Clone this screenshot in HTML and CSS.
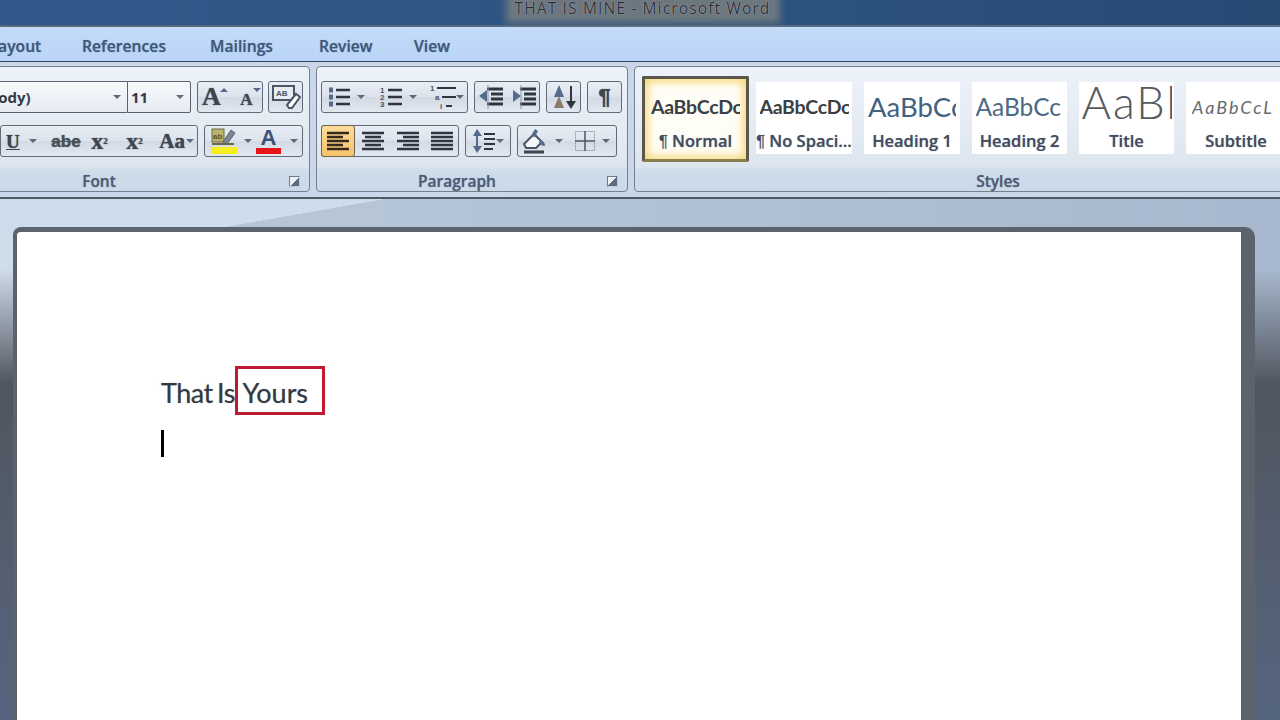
FILE: index.html
```html
<!DOCTYPE html>
<html lang="en">

<head>
    <meta charset="utf-8">
    <title>THAT IS MINE - Microsoft Word</title>
    <link rel="stylesheet" href="styles.css">
</head>

<body>
    <div class="titlebar"><span class="doc-title">THAT IS MINE - Microsoft Word</span></div>

    <div class="tabs">
        <span class="tab tab-layout">Page Layout</span>
        <span class="tab tab-refs">References</span>
        <span class="tab tab-mail">Mailings</span>
        <span class="tab tab-review">Review</span>
        <span class="tab tab-view">View</span>
    </div>

    <div class="ribbon">
        <!-- Font -->
        <section class="group group-font">
            <div class="rows">
                <div class="row">
                    <div class="combo combo-font"><span class="combo-text">(Body)</span><i class="caret"></i></div>
                    <div class="combo combo-size"><span class="combo-text">11</span><i class="caret"></i></div>
                    <div class="btns">
                        <span class="btn w33 glyph big">A<i class="tri-up"></i></span>
                        <span class="btn w33 glyph small">A<i class="tri-down"></i></span>
                    </div>
                    <div class="btns">
                        <span class="btn w35">
                            <svg width="30" height="30" viewBox="0 0 30 30">
                                <rect x="2" y="4" width="21" height="14" fill="#e8edf4" stroke="#4b5563" stroke-width="2" />
                                <text x="5" y="14" class="icon-text">AB</text>
                                <path d="M16 23l9-11 4 3-8 11h-3z" fill="#fff" stroke="#4b5563" stroke-width="2" />
                            </svg>
                        </span>
                    </div>
                </div>
                <div class="row">
                    <div class="btns">
                        <span class="btn w50 glyph u-cell"><u>U</u><i class="caret"></i></span>
                        <span class="btn w32 glyph strike">abe</span>
                        <span class="btn w35 glyph script">x<sub>2</sub></span>
                        <span class="btn w35 glyph script">x<sup>2</sup></span>
                        <span class="btn w46 glyph case">Aa<i class="caret"></i></span>
                    </div>
                    <div class="btns">
                        <span class="btn w51">
                            <svg width="30" height="30" viewBox="0 0 30 30">
                                <rect x="4" y="3" width="12" height="13" fill="#b9b46a" stroke="#6b6a45" />
                                <text x="5" y="13" class="icon-text olive">ab</text>
                                <path d="M15 16l8-12 4 3-8 11z" fill="#7c8794" stroke="#5b6470" />
                                <path d="M4 18h22" stroke="#6b6a45" stroke-width="2" />
                                <rect x="3" y="21" width="26" height="7" fill="#f6ee1e" />
                            </svg>
                            <i class="caret"></i>
                        </span>
                        <span class="btn w48 glyph color-a"><span class="a-stack">A<b></b></span><i class="caret"></i></span>
                    </div>
                </div>
            </div>
            <div class="label"><span class="label-text">Font</span><i class="launcher"></i></div>
        </section>

        <!-- Paragraph -->
        <section class="group group-para">
            <div class="rows">
                <div class="row">
                    <div class="btns">
                        <span class="btn w49">
                            <svg width="24" height="22" viewBox="0 0 24 22">
                                <path d="M2 4h5M2 11h5M2 18h5" stroke="#58688a" stroke-width="5" stroke-dasharray="4 20" />
                                <path d="M9 4h14M9 11h14M9 18h14" stroke="#2f3640" stroke-width="2.500" />
                            </svg>
                            <i class="caret"></i>
                        </span>
                        <span class="btn w55">
                            <svg width="24" height="22" viewBox="0 0 24 22">
                                <text x="1" y="7" class="icon-text">1</text>
                                <text x="1" y="14" class="icon-text">2</text>
                                <text x="1" y="21" class="icon-text">3</text>
                                <path d="M9 4h14M9 11h14M9 18h14" stroke="#2f3640" stroke-width="2.500" />
                            </svg>
                            <i class="caret"></i>
                        </span>
                        <span class="btn w43">
                            <svg width="26" height="26" viewBox="0 0 26 26">
                                <text x="0" y="7" class="icon-text">1</text>
                                <text x="5" y="16" class="icon-text">a</text>
                                <text x="10" y="25" class="icon-text">i</text>
                                <path d="M7 4h19M12 13h14M16 22h6" stroke="#2f3640" stroke-width="2" />
                            </svg>
                            <i class="caret tight"></i>
                        </span>
                    </div>
                    <div class="btns">
                        <span class="btn w33">
                            <svg width="26" height="26" viewBox="0 0 26 26">
                                <path d="M9 5h16M13 10h12M13 15h12M9 20h16" stroke="#2f3640" stroke-width="3" />
                                <path d="M1 12l8-6v12z" fill="#54698c" />
                                <path d="M10 1v24" stroke="#8d98a8" />
                            </svg>
                        </span>
                        <span class="btn w33">
                            <svg width="26" height="26" viewBox="0 0 26 26">
                                <path d="M9 5h16M13 10h12M13 15h12M9 20h16" stroke="#2f3640" stroke-width="3" />
                                <path d="M10 12l-8-6v12z" fill="#54698c" />
                                <path d="M10 1v24" stroke="#8d98a8" />
                            </svg>
                        </span>
                    </div>
                    <div class="btns">
                        <span class="btn w35">
                            <svg width="26" height="28" viewBox="0 0 26 28">
                                <path d="M8 2l5 12H3z" fill="#54698c" />
                                <path d="M8 13l5 12H3z" fill="#8a7a6a" />
                                <path d="M20 3v20" stroke="#2f3640" stroke-width="2" />
                                <path d="M15 18l5 8 5-8z" fill="#2f3640" />
                            </svg>
                        </span>
                    </div>
                    <div class="btns">
                        <span class="btn w35 glyph pilcrow">¶</span>
                    </div>
                </div>
                <div class="row">
                    <div class="btns">
                        <span class="btn w34 active">
                            <svg width="24" height="20" viewBox="0 0 24 20">
                                <path d="M1 2h22M1 6h16M1 10h22M1 14h16M1 18h22" stroke="#352a1c" stroke-width="2.600" />
                            </svg>
                        </span>
                        <span class="btn w35">
                            <svg width="24" height="20" viewBox="0 0 24 20">
                                <path d="M1 2h22M4 6h16M1 10h22M4 14h16M1 18h22" stroke="#2f3640" stroke-width="2.600" />
                            </svg>
                        </span>
                        <span class="btn w35">
                            <svg width="24" height="20" viewBox="0 0 24 20">
                                <path d="M1 2h22M7 6h16M1 10h22M7 14h16M1 18h22" stroke="#2f3640" stroke-width="2.600" />
                            </svg>
                        </span>
                        <span class="btn w34">
                            <svg width="24" height="20" viewBox="0 0 24 20">
                                <path d="M1 2h22M1 6h22M1 10h22M1 14h22M1 18h22" stroke="#2f3640" stroke-width="2.600" />
                            </svg>
                        </span>
                    </div>
                    <div class="btns">
                        <span class="btn w46">
                            <svg width="24" height="26" viewBox="0 0 24 26">
                                <path d="M5 1l5 7H1zM5 25l5-7H1z" fill="#54698c" />
                                <path d="M5 7v12" stroke="#54698c" stroke-width="2" />
                                <path d="M12 6h11M12 11h11M12 16h11M12 21h9" stroke="#2f3640" stroke-width="2.200" />
                            </svg>
                            <i class="caret tight"></i>
                        </span>
                    </div>
                    <div class="btns">
                        <span class="btn w49">
                            <svg width="28" height="28" viewBox="0 0 28 28">
                                <path d="M3 17L13 7l8 8-6 6H5z" fill="#f4f6fa" stroke="#4b5563" stroke-width="2" />
                                <path d="M10 9l4-7 3 2-3 6M19 13q5 1 5 6-4 0-6-3z" fill="#54698c" />
                                <path d="M3 25h20" stroke="#3c4450" stroke-width="3" />
                            </svg>
                            <i class="caret"></i>
                        </span>
                        <span class="btn w51">
                            <svg width="22" height="22" viewBox="0 0 22 22">
                                <rect x="1.500" y="1.500" width="19" height="19" fill="none" stroke="#8d98a8" stroke-dasharray="2 1" />
                                <path d="M11 1v20M1 11h20" stroke="#4b5563" stroke-width="1.500" />
                            </svg>
                            <i class="caret"></i>
                        </span>
                    </div>
                </div>
            </div>
            <div class="label"><span class="label-text">Paragraph</span><i class="launcher"></i></div>
        </section>

        <!-- Styles -->
        <section class="group group-styles">
            <div class="gallery">
                <div class="style-item selected w107">
                    <span class="preview p-normal">AaBbCcDc</span>
                    <span class="style-name"><span class="para-mark">¶</span> Normal</span>
                </div>
                <div class="style-item w96">
                    <span class="preview p-normal">AaBbCcDc</span>
                    <span class="style-name"><span class="para-mark">¶</span> No Spaci...</span>
                </div>
                <div class="style-item w96">
                    <span class="preview p-h1">AaBbCc</span>
                    <span class="style-name">Heading 1</span>
                </div>
                <div class="style-item w95">
                    <span class="preview p-h2">AaBbCc</span>
                    <span class="style-name">Heading 2</span>
                </div>
                <div class="style-item w95">
                    <span class="preview p-title">AaBl</span>
                    <span class="style-name">Title</span>
                </div>
                <div class="style-item w100">
                    <span class="preview p-sub">AaBbCcL</span>
                    <span class="style-name">Subtitle</span>
                </div>
            </div>
            <div class="label"><span class="label-text">Styles</span></div>
        </section>
    </div>

    <div class="workspace">
        <div class="page">
            <p class="line"><span class="plain">That Is </span><span class="marked">Yours</span></p>
            <p class="line caret-line"><span class="text-caret"></span></p>
        </div>
    </div>
</body>

</html>
```

FILE: styles.css
```css
html,
body {
    margin: 0;
    padding: 0;
    height: 100%;
    overflow: hidden;
    font-family: "Open Sans", "Noto Sans", sans-serif;
}

body {
    display: flex;
    flex-direction: column;
    width: 1280px;
    height: 720px;
    background: #b7c7da;
}

/* title bar */
.titlebar {
    flex: 0 0 25px;
    background: linear-gradient(90deg, #30598a 0%, #2d5582 50%, #274a73 100%);
    border-bottom: 2px solid #5b6b7f;
    display: flex;
    justify-content: center;
    padding-left: 5px;
}

.doc-title {
    height: 18px;
    padding: 0 4px;
    line-height: 17px;
    font-size: 15.500px;
    color: #2a2e34;
    letter-spacing: 1.150px;
    background: #6d7780;
    box-shadow: 0 0 7px 5px #6d7780;
    text-shadow: 0 0 1px #c9ced4;
    white-space: nowrap;
}

/* tabs */
.tabs {
    flex: 0 0 30px;
    padding-top: 4px;
    display: flex;
    align-items: center;
    background: linear-gradient(180deg, #c4dbf9 0%, #bad5f8 100%);
    border-bottom: 1px solid #34465e;
    overflow: hidden;
}

.tab {
    font-size: 15.700px;
    font-weight: 600;
    color: #3f5879;
    white-space: nowrap;
    text-shadow: 0 0 1px rgba(63, 88, 121, 0.6);
}

.tab-layout {
    margin-left: -51px;
    width: 133px;
    text-align: left;
}

.tab-refs {
    width: 128px;
}

.tab-mail {
    width: 109px;
}

.tab-review {
    width: 95px;
}

/* ribbon */
.ribbon {
    flex: 0 0 137px;
    box-sizing: border-box;
    display: flex;
    gap: 6px;
    padding: 4px 0 0;
    background: #c9d7e8;
    overflow: hidden;
    border-bottom: 2px solid #4e5964;
}

.group {
    flex: none;
    box-sizing: border-box;
    display: flex;
    flex-direction: column;
    height: 126px;
    border: 1px solid #75808e;
    border-radius: 4px;
    background: linear-gradient(180deg, #edf2f9 0%, #e4ebf3 50%, #dde5ef 80%, #cfdcea 84%, #cbd9e9 100%);
}

.group-font {
    width: 392px;
    margin-left: -82px;
}

.group-para {
    width: 312px;
}

.group-styles {
    width: 728px;
}

.rows {
    flex: 1;
    display: flex;
    flex-direction: column;
    gap: 12px;
    padding-top: 14px;
}

.group-font .rows {
    align-items: flex-end;
    padding-right: 6px;
}

.group-para .rows {
    padding-left: 4px;
}

.row {
    display: flex;
    gap: 6px;
    height: 32px;
}

.group-font .row:first-child {
    gap: 5px;
}

.label {
    display: flex;
    align-items: center;
    height: 20px;
}

.label-text {
    flex: 1;
    text-align: center;
    font-size: 15.500px;
    font-weight: 600;
    color: #4a5b74;
    text-shadow: 0 0 1px rgba(74, 91, 116, 0.6);
}

.launcher {
    flex: none;
    width: 9px;
    height: 9px;
    margin: 0 9px 0 10px;
    border: 1px solid #6d7a8c;
    border-right-color: #c3ccd8;
    border-bottom-color: #c3ccd8;
    background: linear-gradient(135deg, #eef2f7 50%, #5b6b82 50%);
}

/* buttons */
.combo {
    box-sizing: border-box;
    display: flex;
    align-items: center;
    height: 32px;
    border: 1px solid #59636f;
    background: linear-gradient(180deg, #f7f9fc, #e6ebf2);
    color: #333b47;
    font-size: 15px;
    font-weight: 700;
}

.combo-font {
    width: 208px;
    border-right-width: 0;
    justify-content: space-between;
    padding-right: 6px;
    padding-left: 63px;
}

.combo-size {
    width: 64px;
    justify-content: space-between;
    padding: 0 6px 0 3px;
    margin: 0 1px 0 -5px;
    border-radius: 0 2px 2px 0;
}

.combo .combo-text {
    white-space: nowrap;
}

.btns {
    box-sizing: border-box;
    display: flex;
    height: 32px;
    border: 1px solid #5f6a78;
    border-radius: 3px;
    background: linear-gradient(180deg, #e9eef5 0%, #dde3ec 48%, #d3dae4 52%, #e2e8f0 100%);
}

.btn {
    position: relative;
    box-sizing: border-box;
    display: flex;
    flex: none;
    align-items: center;
    justify-content: center;
    gap: 6px;
    height: 100%;
}

.btn:first-child {
    margin-left: -1px;
}

.btn:last-child {
    margin-right: -1px;
}

.w32 { width: 32px; }
.w33 { width: 33px; }
.w34 { width: 34px; }
.w35 { width: 35px; }
.w43 { width: 43px; }
.w46 { width: 46px; }
.w48 { width: 48px; }
.w49 { width: 49px; }
.w50 { width: 50px; }
.w51 { width: 51px; }
.w55 { width: 55px; }
.w95 { width: 95px; }
.w96 { width: 96px; }
.w100 { width: 100px; }
.w107 { width: 107px; }

.btn.active {
    margin: -1px 0 -1px -1px;
    height: 32px;
    border: 1px solid #6f6450;
    border-radius: 3px;
    background: linear-gradient(180deg, #fddc9a, #f8c26c);
}

.icon-text {
    font-family: "Liberation Sans", sans-serif;
    font-size: 8px;
    font-weight: 700;
    fill: #4b5563;
}

.icon-text.olive {
    fill: #55542c;
}

.caret {
    flex: none;
    width: 0;
    height: 0;
    border-left: 4px solid transparent;
    border-right: 4px solid transparent;
    border-top: 4px solid #5b6a80;
}

.caret.tight {
    margin-left: -6px;
}

.tri-up,
.tri-down {
    position: absolute;
    top: 6px;
    right: 2px;
    width: 0;
    height: 0;
    border-left: 4px solid transparent;
    border-right: 4px solid transparent;
}

.tri-up {
    border-bottom: 4px solid #54698c;
}

.tri-down {
    border-top: 4px solid #54698c;
}

.glyph {
    font-family: "Liberation Serif", serif;
    font-weight: 700;
    color: #3e4650;
    line-height: 1;
    text-shadow: 0 0 1px #3e4650;
}

.big {
    font-size: 26px;
    justify-content: flex-start;
    padding-left: 5px;
}

.small {
    font-size: 17px;
    padding-top: 4px;
}

.u-cell {
    font-size: 19px;
    justify-content: flex-start;
    padding-left: 6px;
    gap: 9px;
}

.strike {
    font-family: "Liberation Sans", sans-serif;
    font-size: 17px;
    text-decoration: line-through;
    color: #4b5358;
}

.script {
    font-size: 24px;
    gap: 0;
}

.script sub,
.script sup {
    font-size: 9px;
}

.case {
    font-size: 21px;
    gap: 1px;
    justify-content: flex-end;
    padding-right: 4px;
}

.color-a {
    gap: 9px;
    justify-content: flex-end;
    padding-right: 5px;
}

.a-stack {
    display: flex;
    flex-direction: column;
    align-items: center;
    font-family: "Liberation Sans", sans-serif;
    font-size: 22px;
    line-height: 20px;
    color: #3c5078;
    text-shadow: none;
}

.a-stack b {
    display: block;
    width: 25px;
    height: 6px;
    background: #e8141c;
}

.pilcrow {
    font-family: "Liberation Sans", sans-serif;
    font-size: 22px;
}

/* style gallery */
.gallery {
    flex: 1;
    display: flex;
    gap: 12px;
    align-items: flex-start;
    padding: 15px 0 0 7px;
}

.style-item {
    flex: none;
    box-sizing: border-box;
    display: flex;
    flex-direction: column;
    align-items: center;
    height: 72px;
    overflow: hidden;
    background: #fff;
    color: #434b5f;
}

.style-item.selected {
    height: 86px;
    margin-top: -6px;
    margin-right: -5px;
    border: 3px solid #5c564c;
    border-bottom-color: #8a7c50;
    border-radius: 2px;
    background: #fffef6;
    box-shadow: inset 0 0 8px 3px #f5d877;
}

.selected .preview {
    margin-top: 3px;
}

.preview {
    display: block;
    flex: none;
    height: 48px;
    line-height: 50px;
    white-space: nowrap;
    overflow: hidden;
    font-family: "Lato", sans-serif;
}

.p-normal {
    width: 89px;
    font-size: 19.500px;
    font-weight: 700;
    letter-spacing: -0.300px;
    color: #3a3f45;
}

.p-h1 {
    width: 88px;
    font-size: 27.500px;
    color: #41637f;
}

.p-h2 {
    width: 88px;
    font-size: 24.500px;
    color: #4a6a85;
}

.p-title {
    width: 90px;
    font-size: 45px;
    font-weight: 300;
    color: #555a60;
    letter-spacing: 2px;
    line-height: 40px;
}

.p-sub {
    width: 94px;
    align-self: flex-end;
    font-size: 18px;
    font-style: italic;
    letter-spacing: 2px;
    color: #666b70;
}

.style-name {
    font-size: 16.500px;
    font-weight: 600;
    white-space: nowrap;
    line-height: 22px;
    text-shadow: 0 0 1px rgba(67, 75, 95, 0.6);
}

.para-mark {
    font-family: "Liberation Sans", sans-serif;
    font-weight: 400;
}

/* document */
.workspace {
    flex: 1;
    display: flex;
    padding: 28px 25px 0 13px;
    background:
        linear-gradient(to bottom right, #cfdcec 50%, #b7c5d7 50%) 225px 0 / 160px 28px no-repeat,
        linear-gradient(180deg, rgba(80, 86, 96, 0) 70px, #50565f 185px, #56657f 100%),
        linear-gradient(90deg, #cfdcec 385px, #b5c5d9 385px, #a8b9cf 100%);
    overflow: hidden;
}

.page {
    flex: 1;
    box-sizing: border-box;
    padding: 134px 0 0 144px;
    background: #fff;
    border: solid #5c636c;
    border-width: 5px 14px 0 4px;
    border-radius: 8px 10px 0 0;
    font-family: "Lato", sans-serif;
    font-size: 27px;
    color: #333a44;
    text-shadow: 0 0 1px rgba(51, 58, 68, 0.5);
}

.line {
    display: flex;
    align-items: flex-start;
    margin: 0;
    height: 49px;
    white-space: pre;
}

.plain {
    margin-top: 3px;
    line-height: 47px;
    letter-spacing: -0.500px;
    word-spacing: -2px;
}

.marked {
    box-sizing: border-box;
    flex: none;
    width: 90px;
    height: 49px;
    margin-left: -4px;
    padding-left: 4px;
    line-height: 47px;
    border: 3px solid #c01a30;
}

.caret-line {
    margin-top: 15px;
    height: 27px;
}

.text-caret {
    display: block;
    width: 3px;
    height: 27px;
    background: #000;
}
```
